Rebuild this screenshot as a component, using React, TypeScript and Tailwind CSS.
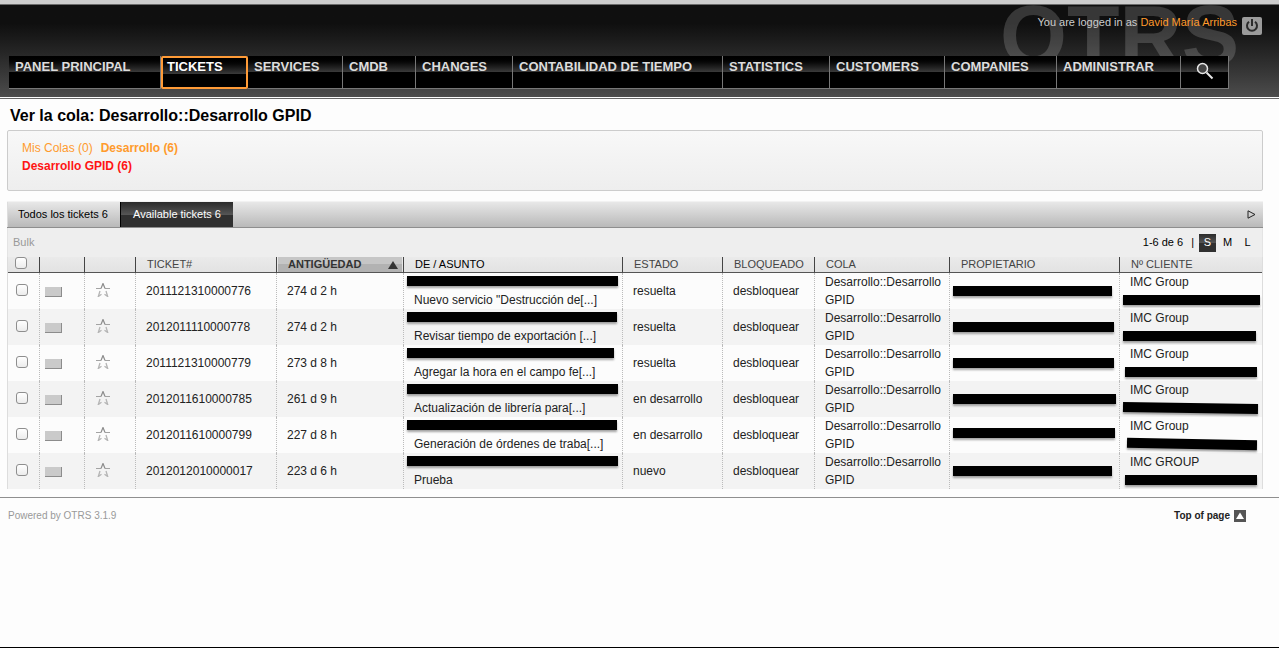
import clsx from "clsx";

const navItems = [
  { label: "PANEL PRINCIPAL", width: "w-[152px]" },
  { label: "TICKETS", width: "w-[87px]", selected: true },
  { label: "SERVICES", width: "w-[95px]" },
  { label: "CMDB", width: "w-[73px]" },
  { label: "CHANGES", width: "w-[97px]" },
  { label: "CONTABILIDAD DE TIEMPO", width: "w-[210px]" },
  { label: "STATISTICS", width: "w-[107px]" },
  { label: "CUSTOMERS", width: "w-[115px]" },
  { label: "COMPANIES", width: "w-[112px]" },
  { label: "ADMINISTRAR", width: "w-[124px]" },
];

const columns = ["ESTADO", "BLOQUEADO", "COLA", "PROPIETARIO", "Nº CLIENTE"];

// Bar classes hide the sender, owner and customer names of each ticket
const tickets = [
  {
    number: "2011121310000776",
    age: "274 d 2 h",
    subject: 'Nuevo servicio "Destrucción de[...]',
    state: "resuelta",
    customer: "IMC Group",
    senderBar: "w-[211px]",
    ownerBar: "w-[159px]",
    customerBar: "w-[137px]",
  },
  {
    number: "2012011110000778",
    age: "274 d 2 h",
    subject: "Revisar tiempo de exportación [...]",
    state: "resuelta",
    customer: "IMC Group",
    senderBar: "w-[210px]",
    ownerBar: "w-[161px]",
    customerBar: "w-[133px]",
  },
  {
    number: "2011121310000779",
    age: "273 d 8 h",
    subject: "Agregar la hora en el campo fe[...]",
    state: "resuelta",
    customer: "IMC Group",
    senderBar: "w-[207px]",
    ownerBar: "w-[161px]",
    customerBar: "w-[132px] ml-0.5",
  },
  {
    number: "2012011610000785",
    age: "261 d 9 h",
    subject: "Actualización de librería para[...]",
    state: "en desarrollo",
    customer: "IMC Group",
    senderBar: "w-[211px]",
    ownerBar: "w-[163px]",
    customerBar: "w-[135px] rotate-[0.8deg]",
  },
  {
    number: "2012011610000799",
    age: "227 d 8 h",
    subject: "Generación de órdenes de traba[...]",
    state: "en desarrollo",
    customer: "IMC Group",
    senderBar: "w-[210px]",
    ownerBar: "w-[162px] mb-1",
    customerBar: "w-[130px] ml-1 rotate-[1.2deg]",
  },
  {
    number: "2012012010000017",
    age: "223 d 6 h",
    subject: "Prueba",
    state: "nuevo",
    customer: "IMC GROUP",
    senderBar: "w-[211px]",
    ownerBar: "w-[159px]",
    customerBar: "w-[132px] ml-0.5",
  },
];

function Redacted({ className }: { className: string }) {
  return (
    <div className={clsx("h-[10px] bg-black shadow-[0_2px_2px_rgba(0,0,0,0.35)]", className)} />
  );
}

function Checkbox({ label, className }: { label: string; className?: string }) {
  return (
    <input
      type="checkbox"
      aria-label={label}
      className={clsx(
        "block size-[12px] appearance-none rounded-[3px] border border-[#8e8e8e] bg-linear-to-b from-white to-[#ececec] checked:bg-[#777]",
        className,
      )}
    />
  );
}

// Big faded wordmark behind the header, its top and bottom run under the bars
function Wordmark() {
  return (
    <div
      aria-hidden="true"
      className="absolute -top-[17px] right-[40px] text-[86px] leading-[94px] font-bold text-white/17"
    >
      OTRS
    </div>
  );
}

function PowerIcon() {
  return (
    <svg viewBox="0 0 20 18" className="h-[18px] w-[20px]">
      <rect width="20" height="18" rx="2" fill="#9b9b9b" />
      <path d="M7 4.700a5 5 0 1 0 6 0" fill="none" stroke="#2a2a2a" strokeWidth="2" />
      <path d="M10 2v7" stroke="#2a2a2a" strokeWidth="2" />
    </svg>
  );
}

function SearchIcon() {
  return (
    <svg viewBox="0 0 18 18" className="size-[18px]" fill="none" stroke="#e8e8e8">
      <circle cx="6.500" cy="6.500" r="5" fill="#444" strokeWidth="1.500" />
      <path d="M10.500 10.500l6 6" strokeWidth="2" />
    </svg>
  );
}

function StarIcon() {
  return (
    <svg viewBox="0 0 14 14" className="block size-[14px]" fill="none">
      <path d="M0 5.500h5M9 5.500h5" stroke="#a3a3a3" />
      <path d="M5 5.500L7 .5l2 5" stroke="#8c8c8c" strokeWidth="1.200" />
      <path d="M4 8L2.300 13.500L5.500 11.200M10 8l1.700 5.500L8.500 11.200" stroke="#b5b5b5" strokeWidth="1.300" />
    </svg>
  );
}

function Header() {
  return (
    <header>
      <div className="h-[4px] bg-[#cdcdcd]" />
      <div className="relative overflow-hidden border-t border-[#6b6b6b] bg-linear-to-b from-[#0f0f0f] from-20% to-[#4d4d4d] pb-2">
        <Wordmark />
        <div className="relative flex h-[51px] items-start justify-end gap-[5px] pt-[11px] pr-[17px] text-[11px] leading-[12px] text-[#ccc]">
          <p>
            You are logged in as{" "}
            <a href="#" className="text-[#ff9b2d]">
              David María Arribas
            </a>
          </p>
          <button type="button" aria-label="Logout" className="mt-px">
            <PowerIcon />
          </button>
        </div>
        <nav className="relative ml-[9px] flex h-[33px]">
          {navItems.map((item) => (
            <a
              key={item.label}
              href="#"
              className={clsx(
                "shrink-0 bg-black bg-linear-to-b from-black to-[#3b3b3b] bg-[length:100%_16px] bg-no-repeat text-[13px] leading-[14px] font-bold whitespace-nowrap",
                item.width,
                item.selected
                  ? "rounded-[2px] border-2 border-[#ff9b37] pt-[2px] pl-1 text-white"
                  : "border-r border-b border-[#777] pt-1 pl-[6px] text-[#ddd]",
              )}
            >
              {item.label}
            </a>
          ))}
          <button
            type="button"
            aria-label="Search"
            className="flex w-[48px] shrink-0 justify-center border-r border-b border-[#777] bg-black bg-linear-to-b from-black to-[#3b3b3b] bg-[length:100%_16px] bg-no-repeat pt-[6px]"
          >
            <SearchIcon />
          </button>
        </nav>
      </div>
      <div className="mt-px h-px bg-[#666]" />
    </header>
  );
}

function QueueOverview() {
  return (
    <section className="min-h-[61px] rounded-[2px] border border-[#ccc] bg-linear-to-b from-[#f8f8f8] to-[#eee] px-[14px] pt-2 text-[12px] leading-[18px]">
      <div className="flex gap-2">
        <a href="#" className="text-[#ff9b2d]">
          Mis Colas (0)
        </a>
        <a href="#" className="font-bold text-[#ff9b2d]">
          Desarrollo (6)
        </a>
      </div>
      <a href="#" className="font-bold text-[#ff1515]">
        Desarrollo GPID (6)
      </a>
    </section>
  );
}

function TicketToolbar() {
  return (
    <>
      <div className="flex h-[27px] items-stretch border-t border-b border-t-[#f2f2f2] border-b-[#8e8e8e] bg-linear-to-b from-[#e8e8e8] to-[#b9b9b9] text-[11px]">
        <a href="#" className="flex w-[113px] items-center border-l border-[#ddd] pl-[10px] text-black">
          Todos los tickets 6
        </a>
        <a
          href="#"
          className="flex w-[113px] items-center justify-center border-l border-black bg-linear-to-b from-[#2b2b2b] via-[#555] via-50% to-[#303030] to-50% text-white"
        >
          Available tickets 6
        </a>
        <button type="button" aria-label="Settings" className="mr-[7px] ml-auto">
          <svg viewBox="0 0 9 9" className="size-[9px]" fill="none" stroke="#222">
            <path d="M1 .8v7.400L8 4.500z" />
          </svg>
        </button>
      </div>
      <div className="flex h-[29px] items-center justify-between border-x border-[#e4e4e4] bg-[#eee] pr-[6px] pl-[5px] text-[11px]">
        <button type="button" className="text-[#999]">
          Bulk
        </button>
        <div className="flex items-center">
          <span>1-6 de 6</span>
          <span className="mr-[5px] ml-2">|</span>
          <button
            type="button"
            className="h-[18px] w-[17px] bg-linear-to-b from-[#2b2b2b] via-[#555] via-50% to-[#303030] to-50% text-white"
          >
            S
          </button>
          <button type="button" className="w-[23px]">
            M
          </button>
          <button type="button" className="w-[17px]">
            L
          </button>
        </div>
      </div>
    </>
  );
}

function TicketTable() {
  return (
    <table className="w-full table-fixed border-separate border-spacing-0 border-x border-[#ddd] text-left text-[12px] leading-[18px] text-[#222]">
      <colgroup>
        <col className="w-[31px]" />
        <col className="w-[45px]" />
        <col className="w-[51px]" />
        <col className="w-[141px]" />
        <col className="w-[127px]" />
        <col className="w-[219px]" />
        <col className="w-[100px]" />
        <col className="w-[92px]" />
        <col className="w-[135px]" />
        <col className="w-[170px]" />
        <col />
      </colgroup>
      <thead>
        <tr className="h-[16px] bg-linear-to-b from-[#eaeaea] to-[#e2e2e2] text-[11px] leading-[15px] text-[#444] *:border-b *:border-b-[#555] *:p-0 *:font-normal">
          <th>
            <Checkbox label="Select all tickets" className="mb-[3px] ml-[7px]" />
          </th>
          <th className="border-l border-l-[#444]" />
          <th className="border-l border-l-[#444]" />
          <th className="border-l border-l-[#444]">
            <a href="#" className="pl-[11px]">
              TICKET#
            </a>
          </th>
          <th className="border-l border-l-[#444]">
            <a
              href="#"
              className="mr-px ml-px flex items-center justify-between bg-linear-to-b from-[#c6c6c6] from-50% to-[#b2b2b2] to-50% pr-1 pl-[10px] font-bold text-[#333]"
            >
              ANTIGÜEDAD
              <svg viewBox="0 0 10 8" className="h-[8px] w-[10px]">
                <path d="M5 0l5 8H0z" fill="#333" />
              </svg>
            </a>
          </th>
          <th className="border-l border-l-[#444]">
            <a href="#" className="pl-[11px] text-black">
              DE / ASUNTO
            </a>
          </th>
          {columns.map((column) => (
            <th key={column} className="border-l border-l-[#444]">
              <a href="#" className="pl-[11px]">
                {column}
              </a>
            </th>
          ))}
        </tr>
      </thead>
      <tbody>
        {tickets.map((ticket) => (
          <tr
            key={ticket.number}
            className="h-[36px] odd:bg-[#fcfcfc] even:bg-[#f3f3f3] *:p-0 [&>td+td]:border-l [&>td+td]:border-dotted [&>td+td]:border-[#bbb]"
          >
            <td>
              <Checkbox label={`Select ticket ${ticket.number}`} className="mb-0.5 ml-2" />
            </td>
            <td>
              <div className="mt-px ml-[5px] h-[10px] w-[17px] border-r border-b border-[#8c8c8c] bg-[#cacaca]" />
            </td>
            <td>
              <div className="mb-0.5 ml-[11px]">
                <StarIcon />
              </div>
            </td>
            <td>
              <a href="#" className="pl-[10px]">
                {ticket.number}
              </a>
            </td>
            <td>
              <span className="pl-[10px]">{ticket.age}</span>
            </td>
            <td className="align-top">
              <div className="h-[18px] pt-[3px] pl-[3px]">
                <Redacted className={ticket.senderBar} />
              </div>
              <a href="#" className="block pl-[10px] whitespace-nowrap">
                {ticket.subject}
              </a>
            </td>
            <td>
              <span className="pl-[10px]">{ticket.state}</span>
            </td>
            <td>
              <span className="pl-[10px]">desbloquear</span>
            </td>
            <td>
              <div className="pr-2 pl-[10px]">Desarrollo::Desarrollo GPID</div>
            </td>
            <td>
              <Redacted className={clsx("ml-[3px]", ticket.ownerBar)} />
            </td>
            <td className="align-top">
              <div className="pl-[10px]">{ticket.customer}</div>
              <div className="pt-1 pl-[3px]">
                <Redacted className={ticket.customerBar} />
              </div>
            </td>
          </tr>
        ))}
      </tbody>
    </table>
  );
}

export default function App() {
  return (
    <div className="flex min-h-screen flex-col border-b border-black bg-[#fdfdfd] font-['Liberation_Sans',Arial,sans-serif] text-black">
      <Header />
      <main className="mr-4 ml-[7px]">
        <h1 className="px-[3px] pt-2 pb-[5px] text-[16px] leading-[18px] font-bold">
          Ver la cola: Desarrollo::Desarrollo GPID
        </h1>
        <QueueOverview />
        <div className="mt-[10px]">
          <TicketToolbar />
          <TicketTable />
        </div>
      </main>
      <footer className="mt-2 flex items-center justify-between border-t border-[#8f8f8f] pt-[10px] pr-[33px] pl-2 text-[10px] leading-[15px]">
        <a href="#" className="text-[#999]">
          Powered by OTRS 3.1.9
        </a>
        <a href="#" className="flex items-center gap-1 font-bold text-[#222]">
          Top of page
          <svg viewBox="0 0 12 12" className="size-[12px]">
            <rect width="12" height="12" fill="#555" />
            <path d="M6 2.500l4 6.500H2z" fill="#fff" />
          </svg>
        </a>
      </footer>
    </div>
  );
}
